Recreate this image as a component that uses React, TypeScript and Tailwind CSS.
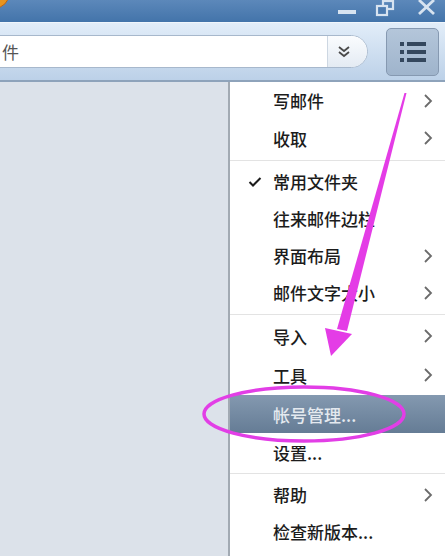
import React from 'react';

type Item =
  | { kind: 'item'; label: string; h: string; sub?: boolean; checked?: boolean; active?: boolean }
  | { kind: 'sep'; h: string };

const items: Item[] = [
  { kind: 'item', label: '写邮件', h: 'h-[37px]', sub: true },
  { kind: 'item', label: '收取', h: 'h-[38px]', sub: true },
  { kind: 'sep', h: 'h-[6px]' },
  { kind: 'item', label: '常用文件夹', h: 'h-[37px]', checked: true },
  { kind: 'item', label: '往来邮件边栏', h: 'h-[37px]' },
  { kind: 'item', label: '界面布局', h: 'h-[37px]', sub: true },
  { kind: 'item', label: '邮件文字大小', h: 'h-[37px]', sub: true },
  { kind: 'sep', h: 'h-[6px]' },
  { kind: 'item', label: '导入', h: 'h-[38px]', sub: true },
  { kind: 'item', label: '工具', h: 'h-[40px]', sub: true },
  { kind: 'item', label: '帐号管理...', h: 'h-[38px]', active: true },
  { kind: 'item', label: '设置...', h: 'h-[38px]' },
  { kind: 'sep', h: 'h-[5px]' },
  { kind: 'item', label: '帮助', h: 'h-[37px]', sub: true },
  { kind: 'item', label: '检查新版本...', h: 'h-[37px]' },
];

function Chevron() {
  return (
    <svg width="10" height="16" viewBox="0 0 10 16" className="mr-[12px]">
      <polyline points="2,2 8,8 2,14" fill="none" stroke="#6b6b6b" strokeWidth="1.8" />
    </svg>
  );
}

function MenuRow({ item }: { item: Item }) {
  if (item.kind === 'sep') {
    return (
      <div className={`${item.h} flex items-center`}>
        <div className="h-px w-full bg-[#e3e3e3]" />
      </div>
    );
  }
  return (
    <div
      className={`${item.h} flex items-center ${
        item.active ? 'bg-gradient-to-b from-[#8499b0] to-[#657c95] text-[#e4e9ef]' : 'text-[#1c1c1c]'
      }`}
    >
      <div className="w-[43px] flex justify-center pl-[6px]">
        {item.checked && (
          <svg width="14" height="12" viewBox="0 0 14 12">
            <polyline points="1.5,6 5,9.5 12.5,2" fill="none" stroke="#1c1c1c" strokeWidth="2" />
          </svg>
        )}
      </div>
      <span className="flex-1 text-[17px] leading-none font-medium">{item.label}</span>
      {item.sub && <Chevron />}
    </div>
  );
}

export default function App() {
  return (
    <div
      className="relative w-[445px] h-[556px] overflow-hidden flex flex-col bg-white"
      style={{ fontFamily: '"Noto Sans CJK SC", "Noto Sans", sans-serif' }}
    >
      {/* title bar */}
      <div className="h-[22px] flex items-start bg-gradient-to-b from-[#5c88ba] to-[#4374aa]">
        <svg width="14" height="22" viewBox="0 0 14 22">
          <circle cx="-5" cy="-6" r="14" fill="#e8941e" />
          <circle cx="-5" cy="-6" r="14" fill="none" stroke="#b8651a" strokeWidth="1" />
        </svg>
        <div className="flex-1" />
        <svg width="20" height="22" viewBox="0 0 20 22" className="mr-[18px]">
          <rect x="1" y="10" width="18" height="4" fill="#d7e3f0" />
        </svg>
        <svg width="20" height="22" viewBox="0 0 20 22" className="mr-[22px]">
          <rect x="8" y="1" width="10" height="8" fill="none" stroke="#d7e3f0" strokeWidth="2.2" />
          <rect x="2" y="6" width="10" height="9" fill="#4c7bb0" stroke="#d7e3f0" strokeWidth="2.2" />
        </svg>
        <svg width="20" height="22" viewBox="0 0 20 22" className="mr-[8px]">
          <path d="M2 0 L17 14 M17 0 L2 14" stroke="#d7e3f0" strokeWidth="2.8" />
        </svg>
      </div>

      {/* toolbar */}
      <div className="h-[58px] flex items-center bg-gradient-to-b from-[#e2edf9] to-[#bcd1e8] border-t border-[#f0f6fc]">
        <div className="ml-[-2px] w-[370px] h-[33px] flex items-center bg-white border border-[#a7b8cc] rounded-r-full">
          <span className="pl-[3px] text-[17px] text-[#555] flex-1">件</span>
          <div className="h-full w-[40px] flex items-center justify-center border-l border-[#cdd7e2] bg-gradient-to-b from-[#fafcfe] to-[#e4ebf3] rounded-r-full">
            <svg width="14" height="14" viewBox="0 0 14 14" className="mr-[8px]">
              <polyline points="2,2 7,6 12,2" fill="none" stroke="#4a4a4a" strokeWidth="1.8" />
              <polyline points="2,7 7,11 12,7" fill="none" stroke="#4a4a4a" strokeWidth="1.8" />
            </svg>
          </div>
        </div>
        <div className="ml-[18px] w-[53px] h-[48px] rounded-[5px] border border-[#8699b1] bg-gradient-to-b from-[#b4c6da] to-[#9fb4cc] flex items-center justify-center">
          <svg width="26" height="20" viewBox="0 0 26 20">
            <rect x="0" y="0" width="4" height="4" fill="#34475d" />
            <rect x="7" y="0" width="19" height="4" fill="#34475d" />
            <rect x="0" y="8" width="4" height="4" fill="#34475d" />
            <rect x="7" y="8" width="19" height="4" fill="#34475d" />
            <rect x="0" y="16" width="4" height="4" fill="#34475d" />
            <rect x="7" y="16" width="19" height="4" fill="#34475d" />
          </svg>
        </div>
      </div>

      {/* main */}
      <div className="flex-1 flex border-t-2 border-[#8ea3bb]">
        <div className="w-[230px] bg-[#dce2ea] border-r-2 border-[#a2aab3]" />
        <div className="flex-1 bg-white flex flex-col">
          {items.map((it, i) => (
            <MenuRow key={i} item={it} />
          ))}
        </div>
      </div>

      {/* annotation overlay */}
      <svg className="absolute left-0 top-0 pointer-events-none" width="445" height="556" viewBox="0 0 445 556">
        <polygon points="404.5,93 406.5,93 347,331 337,329" fill="#e43ce6" />
        <polygon points="325,328 352,334 331,356" fill="#e43ce6" />
        <ellipse cx="304" cy="414" rx="100" ry="27" fill="none" stroke="#e23ee6" strokeWidth="3.5" />
      </svg>
    </div>
  );
}
